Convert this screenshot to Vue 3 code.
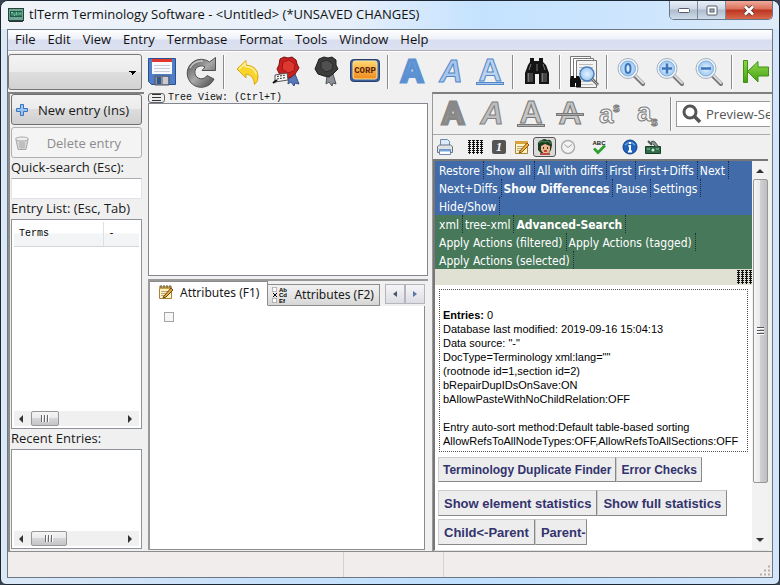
<script setup>
import { ref } from 'vue'

const menus = ['File', 'Edit', 'View', 'Entry', 'Termbase', 'Format', 'Tools', 'Window', 'Help']

const diffRows = [
  [{ t: 'Restore' }, { t: 'Show all' }, { t: 'All with diffs' }, { t: 'First' }, { t: 'First+Diffs' }, { t: 'Next' }],
  [{ t: 'Next+Diffs' }, { t: 'Show Differences', b: true }, { t: 'Pause' }, { t: 'Settings' }],
  [{ t: 'Hide/Show' }]
]
const actionRows = [
  [{ t: 'xml' }, { t: 'tree-xml' }, { t: 'Advanced-Search', b: true }],
  [{ t: 'Apply Actions (filtered)' }, { t: 'Apply Actions (tagged)' }],
  [{ t: 'Apply Actions (selected)' }]
]
const linkGroups = [
  { name: 'blue', rows: diffRows },
  { name: 'green', rows: actionRows }
]

const info = [
  'Database last modified: 2019-09-16 15:04:13',
  'Data source: "-"',
  'DocType=Terminology xml:lang=""',
  '(rootnode id=1,section id=2)',
  'bRepairDupIDsOnSave:ON',
  'bAllowPasteWithNoChildRelation:OFF',
  '',
  'Entry auto-sort method:Default table-based sorting',
  'AllowRefsToAllNodeTypes:OFF,AllowRefsToAllSections:OFF'
]

const quick = ref('')
const preview = ref('')
const checked = ref(false)
</script>

<template>
  <div class="window">
    <svg class="defs" width="0" height="0" aria-hidden="true">
      <defs>
        <linearGradient id="blueA" x1="0" y1="0" x2="0" y2="1"><stop offset="0" stop-color="#8fb8e8" /><stop offset="1" stop-color="#3f78c2" /></linearGradient>
        <linearGradient id="grayA" x1="0" y1="0" x2="0" y2="1"><stop offset="0" stop-color="#7c7c7c" /><stop offset="1" stop-color="#a9a9a9" /></linearGradient>
        <linearGradient id="steel" x1="0" y1="0" x2="1" y2="1"><stop offset="0" stop-color="#4a4a4a" /><stop offset=".5" stop-color="#a8a8a8" /><stop offset="1" stop-color="#3f3f3f" /></linearGradient>
        <linearGradient id="gold" x1="0" y1="0" x2="0" y2="1"><stop offset="0" stop-color="#ffd76e" /><stop offset="1" stop-color="#f08a1d" /></linearGradient>
        <linearGradient id="leaf" x1="0" y1="0" x2="0" y2="1"><stop offset="0" stop-color="#8fd84a" /><stop offset="1" stop-color="#43a012" /></linearGradient>
        <radialGradient id="glass"><stop offset="0" stop-color="#e6f3ff" /><stop offset="1" stop-color="#9cc8f2" /></radialGradient>
      </defs>
    </svg>

    <header class="titlebar">
      <svg class="appicon" width="16" height="14" viewBox="0 0 16 14">
        <rect x=".5" y=".5" width="15" height="12" fill="#6fa592" stroke="#24443c" />
        <rect x="2" y="3" width="12" height="6" fill="#1f5a48" />
        <path d="M3 4.500h2M4 4.500v3M6 4.500v3h1M8 7.500v-3h1v3M11 7.500v-3l1 1 1-1v3" stroke="#7fd0a8" fill="none" />
        <path d="M1 13.500h14" stroke="#333" />
      </svg>
      <h1>tlTerm Terminology Software - &lt;Untitled&gt; (*UNSAVED CHANGES)</h1>
      <div class="winbtns">
        <button class="wb min" aria-label="Minimize"><svg width="14" height="8" viewBox="0 0 14 8"><rect x="1.500" y="2.500" width="11" height="4" rx="1" fill="#fff" stroke="#555c6b" /></svg></button>
        <button class="wb max" aria-label="Maximize"><svg width="12" height="11" viewBox="0 0 12 11"><rect x="1" y="1" width="10" height="9" rx="1" fill="#fff" stroke="#555c6b" /><rect x="4" y="4" width="4" height="3" fill="#aab4c4" stroke="#555c6b" /></svg></button>
        <button class="wb close" aria-label="Close"><svg width="14" height="11" viewBox="0 0 14 11"><path d="M3 1.500l8 8M11 1.500l-8 8" stroke="#5b3a3a" stroke-width="4.500" /><path d="M3 1.500l8 8M11 1.500l-8 8" stroke="#fff" stroke-width="2.600" /></svg></button>
      </div>
    </header>

    <div class="client">
      <nav class="menubar"><a v-for="m in menus" :key="m" href="#">{{ m }}</a></nav>

      <div class="toolbar">
        <select class="combo" aria-label="Termbase"><option></option></select>
        <button class="tb" aria-label="Save">
          <svg width="30" height="30" viewBox="0 0 30 30">
            <path d="M1.500 1.500h27v26h-24l-3-3z" fill="#4f7fc9" stroke="#2c4f90" />
            <rect x="5" y="2" width="20" height="15" fill="#f7f9fc" /><rect x="5" y="2" width="20" height="3" fill="#e0382e" />
            <path d="M7 8.500h16M7 11.500h16M7 14.500h16" stroke="#c6ccd8" />
            <path d="M8 19h14v9h-14z" fill="#8a8f98" stroke="#4d5766" /><rect x="10" y="20" width="4" height="7" fill="#35568f" /><path d="M16 20h5v7h-5z" fill="#c8ccd2" />
          </svg>
        </button>
        <button class="tb" aria-label="Reload">
          <svg width="32" height="32" viewBox="0 0 32 32">
            <path d="M24.500 6A14 14 0 1 0 29 23L22 19.500A6.500 6.500 0 1 1 20 11L17 14.500H30.500V1.500z" fill="url(#steel)" stroke="#505050" />
            <path d="M5 12q4-8 13-7" stroke="#c9c9c9" stroke-width="1.500" fill="none" />
          </svg>
        </button>
        <i class="sep"></i>
        <button class="tb" aria-label="Undo">
          <svg width="28" height="28" viewBox="0 0 28 28"><path d="M3 11L12 2.500V7q12 1 12 12 0 5-3.500 7.500Q20 17 12 16v4z" fill="#fbd42a" stroke="#d9a913" /><path d="M5 11L11 5.500v3q9 0 11.500 8" fill="none" stroke="#fff0a0" stroke-width="1.500" /></svg>
        </button>
        <button class="tb" aria-label="Certify">
          <svg width="30" height="32" viewBox="0 0 30 32">
            <path d="M17 19l-1 9 3-2 3 4 1-3 4 1-4-10z" fill="#5878b8" stroke="#324f88" />
            <path d="M8 3l4-2 4 1 4-1 4 3 1 4 2 4-4 6-5 4-5-1-5-2-3-6 2-4z" fill="#c92020" stroke="#7d0e0e" />
            <path d="M11 6l6-2 6 4-1 7-6 2-6-4z" fill="#dc3830" stroke="#a31414" />
            <path d="M3 19l12-2 1 7-13 2z" fill="#f8f8f8" stroke="#555" /><path d="M5 20.500l9-1.500M5 23l9-1.500" stroke="#333" stroke-dasharray="2 1" />
            <path d="M1 27l4-3" stroke="#111" stroke-width="2" />
          </svg>
        </button>
        <button class="tb" aria-label="Seal">
          <svg width="30" height="32" viewBox="0 0 30 32">
            <path d="M16 19l-1 9 3-2 3 4 1-3 3 1-3-10z" fill="#8b8f95" stroke="#50545a" />
            <path d="M8 3l5-2 4 1 4-1 4 3 0 5 2 4-4 4-5 4-5-1-6-2-3-5 2-5z" fill="#3c3c3c" stroke="#1f1f1f" />
            <path d="M10 6l6-2 6 4-1 6-6 2-5-4z" fill="#505050" stroke="#2b2b2b" />
          </svg>
        </button>
        <button class="tb" aria-label="Corporate">
          <svg width="32" height="28" viewBox="0 0 32 28"><rect x="1.500" y="1.500" width="29" height="22" rx="3" fill="#3b5e9c" stroke="#27406f" /><rect x="4" y="3" width="24" height="18" rx="2" fill="url(#gold)" stroke="#ffe49a" /><text x="16" y="15" text-anchor="middle" class="corp">CORP</text></svg>
        </button>
        <i class="sep"></i>
        <button class="tb" aria-label="Bold"><svg width="36" height="38" viewBox="0 0 36 38"><text x="18" y="29" class="ltr heavy" text-anchor="middle" fill="url(#blueA)" stroke="#5d92d2">A</text></svg></button>
        <button class="tb" aria-label="Italic"><svg width="36" height="38" viewBox="0 0 36 38"><text x="18" y="29" class="ltr ital" text-anchor="middle" fill="#a9c6ea" stroke="#5287ca">A</text></svg></button>
        <button class="tb" aria-label="Underline"><svg width="36" height="38" viewBox="0 0 36 38"><text x="18" y="28" class="ltr" text-anchor="middle" fill="#bcd3ee" stroke="#5287ca">A</text><rect x="4.500" y="29.500" width="27" height="2" fill="#a9c6ea" stroke="#5287ca" /></svg></button>
        <i class="sep"></i>
        <button class="tb" aria-label="Find">
          <svg width="28" height="30" viewBox="0 0 28 30"><path d="M7 1h4v3h5V1h4v4l3 3 3 8v11H16V17h-4v10H2V16l3-8 2-3z" fill="#151515" /><path d="M4 16h6v9H4zM18 16h6v9h-6z" fill="#444" /><path d="M5.500 16v9M19.500 16v9" stroke="#777" /><path d="M8 7l-2 6M20 7l2 6M14 7v7" stroke="#777" /></svg>
        </button>
        <i class="sep"></i>
        <button class="tb" aria-label="Find in files">
          <svg width="34" height="34" viewBox="0 0 34 34"><path d="M3.500 1.500h20v28h-20z" fill="#fff" stroke="#777" /><path d="M6.500 3.500h20v28h-20z" fill="#fff" stroke="#777" /><path d="M9.500 5.500h20v27h-20z" fill="#f3f3f3" stroke="#777" /><path d="M12 9.500h14M12 12.500h14M12 15.500h8M12 18.500h6M12 26.500h13M12 29.500h14" stroke="#bbb" /><circle cx="20" cy="19" r="7" fill="url(#glass)" stroke="#4b7fbd" stroke-width="1.500" /><path d="M25 24l6 6" stroke="#666" stroke-width="3" /><path d="M25 24l6 6" stroke="#bbb" /><path d="M4 21h3v2h2v-2h3l2 4v7H9v-4H8v4H3v-7z" fill="#111" /></svg>
        </button>
        <i class="sep"></i>
        <button v-for="z in ['0', '+', '-']" :key="z" class="tb" :aria-label="'Zoom ' + z">
          <svg width="30" height="30" viewBox="0 0 30 30">
            <path d="M19 19l8 8" stroke="#777" stroke-width="4" stroke-linecap="round" /><path d="M19 18l8 8" stroke="#ddd" stroke-width="2" stroke-linecap="round" />
            <circle cx="12" cy="11.500" r="10" fill="#eef3f8" stroke="#a5b1c0" /><circle cx="12" cy="11.500" r="7.500" fill="url(#glass)" stroke="#7fadde" />
            <ellipse v-if="z === '0'" cx="12" cy="11.500" rx="2.500" ry="4.500" fill="none" stroke="#3d74bb" stroke-width="2" />
            <path v-else-if="z === '+'" d="M12 6.500v10M7 11.500h10" stroke="#3d74bb" stroke-width="2.500" />
            <path v-else d="M7 11.500h10" stroke="#3d74bb" stroke-width="2.500" />
          </svg>
        </button>
        <i class="sep"></i>
        <button class="tb" aria-label="Back"><svg width="28" height="28" viewBox="0 0 28 28"><path d="M1.500 2.500h4v22h-4z" fill="url(#leaf)" stroke="#3f9212" /><path d="M5.500 13.500L16 3.500v5.500h10.500v9H16v6z" fill="url(#leaf)" stroke="#3f9212" /></svg></button>
      </div>

      <main class="main">
        <aside class="left">
          <div class="wides">
            <button class="wide">
              <svg width="16" height="16" viewBox="0 0 16 16"><path d="M6.500 2.500h3v4h4v3h-4v4h-3v-4h-4v-3h4z" fill="#9cc4f0" stroke="#3a74c0" /></svg>
              <span>New entry (Ins)</span>
            </button>
            <button class="wide off" disabled>
              <svg width="16" height="16" viewBox="0 0 16 16"><path d="M2 4.500h12l-2 10H4z" fill="#d6d6d6" stroke="#a8a8a8" /><ellipse cx="8" cy="4" rx="6.500" ry="2" fill="#eee" stroke="#aaa" /><path d="M6 7v6M8 7v7M10 7v6" stroke="#aaa" /></svg>
              <span>Delete entry</span>
            </button>
          </div>
          <label for="quick">Quick-search (Esc):</label>
          <input id="quick" v-model="quick" class="quick" type="text">
          <p class="lbl">Entry List: (Esc, Tab)</p>
          <div class="list grow">
            <table class="terms"><thead><tr><th class="c1">Terms</th><th>-</th></tr></thead></table>
            <div class="fill"></div>
            <div class="hscroll"><svg width="5" height="8"><path d="M5 0v8L1 4z" fill="#333" /></svg><span class="thumb"><i></i><i></i><i></i></span><svg width="5" height="8"><path d="M0 0v8L4 4z" fill="#333" /></svg></div>
          </div>
          <p class="lbl">Recent Entries:</p>
          <div class="list recent">
            <div class="fill"></div>
            <div class="hscroll"><svg width="5" height="8"><path d="M5 0v8L1 4z" fill="#333" /></svg><span class="thumb big"><i></i><i></i><i></i></span><svg width="5" height="8"><path d="M0 0v8L4 4z" fill="#333" /></svg></div>
          </div>
        </aside>

        <section class="center">
          <div class="treehead"><button class="burger" aria-label="Tree menu"><svg width="9" height="7"><path d="M0 .5h9M0 3.500h9M0 6.500h9" stroke="#333" /></svg></button><span>Tree View: (Ctrl+T)</span></div>
          <div class="tree"></div>
          <div class="attrs">
            <div class="tabs">
              <button class="tab on">
                <svg width="16" height="16" viewBox="0 0 16 16"><path d="M1.500 3.500h12v11h-12z" fill="#fff3c4" stroke="#a8843a" /><path d="M1 2h13v3H1z" fill="#c9a24a" /><path d="M3 1v3M6 1v3M9 1v3M12 1v3" stroke="#555" /><path d="M3 7.500h8M3 9.500h6M3 11.500h4" stroke="#b9a878" /><path d="M6 12l7-8 2 2-7 7-3 1z" fill="#e8a33a" stroke="#6b4413" /></svg>
                <span>Attributes (F1)</span>
              </button>
              <button class="tab">
                <svg width="16" height="20" viewBox="0 0 16 20"><path d="M.5 2.500h4v4h-4zM.5 13.500h4v4h-4z" fill="#fff" stroke="#777" stroke-dasharray="1 1" /><path d="M1 8l4 4M5 8l-4 4" stroke="#000" /><text x="7" y="7" class="tiny">Ab</text><text x="7" y="12" class="tiny">Cd</text><text x="7" y="18" class="tiny">Ef</text></svg>
                <span>Attributes (F2)</span>
              </button>
              <div class="spin">
                <button aria-label="Previous tab"><svg width="4" height="6"><path d="M4 0v6L0 3z" fill="#4a5568" /></svg></button>
                <button aria-label="Next tab"><svg width="4" height="6"><path d="M0 0v6L4 3z" fill="#5577aa" /></svg></button>
              </div>
            </div>
            <div class="pane"><input v-model="checked" type="checkbox" aria-label="Attribute"></div>
          </div>
        </section>

        <section class="right">
          <div class="fmt">
            <button class="tb" aria-label="Bold"><svg width="36" height="38" viewBox="0 0 36 38"><text x="18" y="29" class="ltr heavy" text-anchor="middle" fill="url(#grayA)" stroke="#888">A</text></svg></button>
            <button class="tb" aria-label="Italic"><svg width="36" height="38" viewBox="0 0 36 38"><text x="18" y="29" class="ltr ital" text-anchor="middle" fill="#bdbdbd" stroke="#808080">A</text></svg></button>
            <button class="tb" aria-label="Underline"><svg width="36" height="38" viewBox="0 0 36 38"><text x="18" y="28" class="ltr" text-anchor="middle" fill="#c6c6c6" stroke="#777">A</text><rect x="4.500" y="29.500" width="27" height="2" fill="#b5b5b5" stroke="#777" /></svg></button>
            <button class="tb" aria-label="Strikethrough"><svg width="36" height="38" viewBox="0 0 36 38"><text x="18" y="29" class="ltr" text-anchor="middle" fill="#c6c6c6" stroke="#777">A</text><rect x="4.500" y="18.500" width="27" height="2" fill="#aaa" stroke="#777" /></svg></button>
            <button class="tb" aria-label="Superscript"><svg width="36" height="38" viewBox="0 0 36 38"><text x="8" y="28" class="sub" fill="#f4f4f4" stroke="#7d7d7d">a</text><text x="22" y="17" class="subs" fill="#eee" stroke="#777">s</text></svg></button>
            <button class="tb" aria-label="Subscript"><svg width="36" height="38" viewBox="0 0 36 38"><text x="7" y="26" class="sub" fill="#f4f4f4" stroke="#7d7d7d">a</text><text x="21" y="31" class="subs" fill="#eee" stroke="#777">s</text></svg></button>
            <i class="sep"></i>
            <label class="search">
              <svg width="20" height="20" viewBox="0 0 20 20"><circle cx="8" cy="8" r="6" fill="none" stroke="#555" stroke-width="3" /><path d="M12 12l6 6" stroke="#555" stroke-width="3.500" /></svg>
              <input v-model="preview" type="text" placeholder="Preview-Search" aria-label="Preview search">
            </label>
          </div>

          <div class="small">
            <button class="sb" aria-label="Print"><svg width="18" height="18" viewBox="0 0 18 18"><path d="M4.500 1.500h7l2 2v5h-9z" fill="#dceafa" stroke="#6d88ac" /><path d="M1.500 8.500l2-1.500h11l2 1.500v6h-15z" fill="#dfe3e8" stroke="#6b7684" /><path d="M3.500 11.500h11v5h-11z" fill="#fff" stroke="#6d88ac" /><path d="M4 12.500h10" stroke="#71a4de" stroke-width="2" /></svg></button>
            <i class="sp"></i>
            <button class="sb" aria-label="Columns"><svg width="15" height="14" viewBox="0 0 15 14" shape-rendering="crispEdges"><path d="M1.500 0v14M5.500 0v14M9.500 0v14M13.500 0v14" stroke="#111" stroke-width="3" stroke-dasharray="1 1" /><path d="M1.500 0v14M5.500 0v14M9.500 0v14M13.500 0v14" stroke="#111" /></svg></button>
            <button class="sb" aria-label="Level one"><svg width="16" height="16" viewBox="0 0 16 16"><rect x="1" y="1" width="14" height="14" rx="2" fill="#555" /><text x="8" y="12" text-anchor="middle" class="one">1</text></svg></button>
            <button class="sb" aria-label="Edit"><svg width="16" height="16" viewBox="0 0 16 16"><path d="M1.500 3.500h12v11h-12z" fill="#fff3c4" stroke="#a8843a" /><path d="M1 2h13v3H1z" fill="#d8a33a" /><path d="M3 7.500h8M3 9.500h6M3 11.500h4" stroke="#b9a878" /><path d="M6 12l7-8 2 2-7 7-3 1z" fill="#f2b13a" stroke="#8b5413" /></svg></button>
            <button class="sb pressed" aria-label="Profile"><svg width="18" height="18" viewBox="0 0 18 18"><path d="M2 8q-1-5 4-6 2-2 5 0 5-1 5 5l-1 5-2 3H5l-3-3z" fill="#1c3a22" /><path d="M5 8l4-2 5 2v4q-1 4-4 4t-5-4z" fill="#eeb48c" /><path d="M3 5q3-3 6-1 4-2 6 2" stroke="#3f7a48" stroke-width="1.500" fill="none" /><path d="M7 10h1M11 10h1" stroke="#111" stroke-width="1.500" /><path d="M8 13h3M4 16h10" stroke="#b02020" stroke-width="1.500" /></svg></button>
            <button class="sb" aria-label="History"><svg width="16" height="16" viewBox="0 0 16 16"><circle cx="8" cy="8" r="6.500" fill="#f3f3f3" stroke="#b0b0b0" stroke-width="1.500" /><path d="M4.500 5.500L8 8.500l4-3" stroke="#999" fill="none" /></svg></button>
            <i class="sp"></i>
            <button class="sb" aria-label="Spell check"><svg width="16" height="16" viewBox="0 0 16 16"><text x="8" y="6" text-anchor="middle" class="abc">ABC</text><path d="M3 9.500l4 4 7-7" stroke="#2fa02f" stroke-width="2.800" fill="none" /></svg></button>
            <i class="sp"></i>
            <button class="sb" aria-label="Info"><svg width="16" height="16" viewBox="0 0 16 16"><circle cx="8" cy="8" r="7" fill="#1f63bd" stroke="#123f80" /><path d="M3 6q5-5 10 0" stroke="#6ba3e6" stroke-width="1.500" fill="none" /><path d="M8 3v2M6.500 7H8v5M6 12.500h4" stroke="#fff" stroke-width="2" fill="none" /></svg></button>
            <button class="sb" aria-label="Toolbox"><svg width="16" height="16" viewBox="0 0 16 16"><path d="M.5 7.500h15v7H.5z" fill="#2f6b48" stroke="#173d28" /><path d="M6 5V3q2-2 4 0l3 4-2 1-3-3" fill="#8a9a90" stroke="#47584e" /><path d="M3 2l4 4" stroke="#47584e" stroke-width="2" /><circle cx="8" cy="11" r="1.500" fill="#cfe8d8" /><path d="M2 10h3M11 10h3" stroke="#8fc8a4" /></svg></button>
          </div>

          <div class="view">
            <div class="doc">
              <div v-for="g in linkGroups" :key="g.name" class="links" :class="g.name">
                <div v-for="(row, i) in g.rows" :key="i" class="lrow"><a v-for="l in row" :key="l.t" href="#" :class="{ b: l.b }">{{ l.t }}</a></div>
              </div>
              <div class="beige"><svg width="15" height="14" viewBox="0 0 15 14" shape-rendering="crispEdges"><path d="M1.500 0v14M5.500 0v14M9.500 0v14M13.500 0v14" stroke="#111" stroke-width="3" stroke-dasharray="1 1" /><path d="M1.500 0v14M5.500 0v14M9.500 0v14M13.500 0v14" stroke="#111" /></svg></div>
              <div class="info">
                <p></p>
                <p><b>Entries:</b> 0</p>
                <p v-for="(line, i) in info" :key="i">{{ line }}</p>
              </div>
              <div class="btnrow sm"><button>Terminology Duplicate Finder</button><button>Error Checks</button></div>
              <div class="btnrow mid"><button>Show element statistics</button><button>Show full statistics</button></div>
              <div class="btnrow low"><button>Child&lt;-Parent</button><button class="cut">Parent-</button></div>
            </div>
            <div class="vscroll"><svg width="8" height="5"><path d="M0 5h8L4 1z" fill="#333" /></svg><span class="vthumb"><i></i><i></i><i></i></span><svg width="8" height="5"><path d="M0 0h8L4 4z" fill="#333" /></svg></div>
          </div>
        </section>
      </main>

      <footer class="status"><span></span><span></span><span><svg width="11" height="11"><path d="M8 1.500h2M4 5.500h2M8 5.500h2M0 9.500h2M4 9.500h2M8 9.500h2" stroke="#b5b0aa" stroke-width="2" /></svg></span></footer>
    </div>
  </div>
</template>

<style>
body { background: #3a4350; }
</style>

<style scoped>
* { box-sizing: border-box; }
.window { font-family: "Open Sans", "Noto Sans", sans-serif; font-size: 13px; color: #1a1a1a; height: 100vh; display: flex; flex-direction: column; padding: 0 6px 6px; border: 1px solid #1c2733; border-radius: 8px 8px 6px 6px; background: linear-gradient(90deg, #dbe8f6, #c9e1fa 30%, #bfe0ff 60%, #d3e6fa); overflow: hidden; }
.defs { position: absolute; }
button { font: inherit; color: inherit; padding: 0; border: 0; background: none; }
svg { flex: none; }
p { margin: 0; }
.titlebar { flex: none; height: 28px; display: flex; align-items: center; gap: 5px; margin: 0 -6px; padding: 0 6px 0 7px; background: linear-gradient(90deg, #f0f4f9 0, #e6effa 45%, #c4e2ff 62%, #cfe6fd 85%, #dfebf7); }
.titlebar h1 { margin: 0; flex: 1; font-size: 13px; font-weight: 400; line-height: 20px; padding-bottom: 2px; white-space: nowrap; color: #111; }
.winbtns { align-self: flex-start; display: flex; height: 19px; border: 1px solid #66758a; border-top: 0; border-radius: 0 0 5px 5px; overflow: hidden; }
.wb { width: 28px; display: flex; align-items: center; justify-content: center; border-right: 1px solid #7c899b; background: linear-gradient(#e8eff7 0, #ccd7e4 45%, #aebccd 50%, #cfdcea); }
.wb.close { width: 46px; border: 0; background: linear-gradient(#eeaa9b 0, #d9705a 45%, #bd3320 50%, #d8694c); }
.client { flex: 1; min-height: 0; display: flex; flex-direction: column; border: 1px solid #6b7785; background: #f0f0f0; }
.menubar { flex: none; height: 21px; display: flex; gap: 12px; padding: 0 7px; background: linear-gradient(#fff 0, #eef1f9 45%, #d8def0 50%, #dde2f1); border-bottom: 1px solid #a9acb5; }
.menubar a { color: #111; text-decoration: none; line-height: 19px; }
.toolbar { flex: none; height: 41px; display: flex; align-items: center; overflow: hidden; border-top: 1px solid #fff; background: #f0f0f0; }
.combo { flex: none; appearance: none; width: 134px; height: 36px; border: 1px solid #777; border-radius: 3px; background-image: linear-gradient(45deg, transparent 50%, #000 50%), linear-gradient(-45deg, transparent 50%, #000 50%), linear-gradient(#f3f3f3 0, #ececec 49%, #dedede 50%, #d2d2d2); background-size: 4px 4px, 4px 4px, 100% 100%; background-position: right 8px top 16px, right 4px top 16px, 0 0; background-repeat: no-repeat; }
.tb { flex: none; width: 39px; height: 38px; display: flex; align-items: center; justify-content: center; }
.sep { flex: none; width: 8px; height: 34px; background: linear-gradient(90deg, transparent 3px, #8c8c8c 3px, #8c8c8c 4px, #fff 4px, #fff 5px, transparent 5px); }
.ltr { font: 700 32px "Liberation Sans", sans-serif; stroke-width: 1px; }
.heavy { stroke-width: 3px; }
.ital { font: italic 700 32px "Liberation Sans", sans-serif; }
.corp { font: 700 9px "Liberation Mono", monospace; fill: #5a2208; }
.sub { font: 700 26px "Liberation Sans", sans-serif; }
.subs { font: 700 12px "Liberation Sans", sans-serif; }
.one { font: italic 700 12px "Liberation Serif", serif; fill: #fff; }
.abc { font: 700 6px "Liberation Sans", sans-serif; fill: #111; }
.tiny { font: 700 6px "Liberation Sans", sans-serif; }

.main { flex: 1; min-height: 0; display: grid; grid-template-columns: 136px minmax(0, 288fr) minmax(0, 340fr); }
.left { display: flex; flex-direction: column; padding: 0 2px 2px 1px; border-top: 2px solid #808080; border-left: 2px solid #8d8d8d; min-height: 0; }
.wides { flex: none; display: flex; flex-direction: column; gap: 2px; }
.wide { height: 31px; display: flex; align-items: center; padding: 0 12px 0 2px; border: 1px solid #707070; border-radius: 3px; background: linear-gradient(#f2f2f2 0, #ebebeb 49%, #dddddd 50%, #cfcfcf); }
.wide span { flex: 1; text-align: right; white-space: nowrap; }
.wide.off { border-color: #b0b0b0; background: #f4f4f4; color: #8c8c8c; }
.wide.off span { padding-right: 8px; }
.left label, .lbl { flex: none; height: 20px; line-height: 19px; white-space: nowrap; }
.quick { flex: none; height: 21px; width: 100%; border: 1px solid #e2e3ea; border-top-color: #abadb3; background: #fff; }
.list { display: flex; flex-direction: column; border: 1px solid #8e9299; background: #fff; padding: 2px; min-height: 0; }
.grow { flex: 1; }
.recent { flex: none; height: 100px; }
.fill { flex: 1; }
.terms { width: 100%; border-collapse: collapse; font: 10px "Liberation Mono", monospace; background: linear-gradient(#fff 45%, #f3f4f6 50%); color: #000; }
.terms th { height: 24px; padding: 0 5px; font-weight: 400; text-align: left; border-bottom: 1px solid #d5d5d5; }
.terms .c1 { width: 89px; border-right: 1px solid #dedfe1; }
.hscroll { flex: none; height: 15px; display: flex; align-items: center; background: #f0f0f0; padding: 0 6px 0 4px; gap: 8px; }
.hscroll svg:last-child { margin-left: auto; }
.thumb { width: 28px; height: 15px; display: flex; align-items: center; justify-content: center; gap: 1px; border: 1px solid #979797; border-radius: 2px; background: linear-gradient(#f5f5f5 0, #e9e9eb 49%, #d6d6d8 50%, #c5c5c8); }
.thumb.big { width: 36px; }
.thumb i { width: 2px; height: 7px; background: #666; border-right: 1px solid #fff; }

.center { display: flex; flex-direction: column; padding: 0 4px 1px 4px; min-height: 0; }
.treehead { flex: none; height: 11px; display: flex; align-items: center; gap: 3px; font: 10px "Liberation Mono", monospace; color: #111; }
.burger { width: 17px; height: 10px; display: flex; align-items: center; justify-content: center; border: 1px solid #666; border-radius: 3px; background: #eee; }
.tree { flex: 171; border: 1px solid #828790; background: #fff; }
.attrs { flex: 270; display: flex; flex-direction: column; margin-top: 3px; border: 1px solid #999; border-width: 2px 0 0 2px; padding-right: 3px; min-height: 0; }
.tabs { flex: none; height: 25px; display: flex; align-items: flex-end; overflow: hidden; font-family: "Noto Sans", sans-serif; font-size: 12px; }
.tab { display: flex; align-items: center; gap: 6px; height: 22px; padding: 0 5px 0 4px; border: 1px solid #8c8c8c; border-width: 1px 1px 1px 0; background: linear-gradient(#f0f0f0 0, #e6e6e6 50%, #d6d6d6); white-space: nowrap; }
.tab.on { height: 25px; padding: 0 8px 2px 8px; background: #fff; border-bottom-color: #fff; }
.spin { display: flex; margin-left: auto; height: 22px; padding-bottom: 2px; }
.spin button { width: 20px; display: flex; align-items: center; justify-content: center; border: 1px solid #b5b5bb; background: linear-gradient(#f5f5f8, #dcdce4); }
.pane { flex: 1; border: 1px solid #8c8c8c; border-top: 0; border-left: 0; background: #fff; padding: 6px 14px; }
.pane input { appearance: none; display: block; width: 10px; height: 10px; margin: 0; border: 1px solid #a5a5a5; background: #f6f6f6; }

.right { display: flex; flex-direction: column; min-height: 0; border-top: 2px solid #808080; border-left: 1px solid #999; padding-right: 2px; }
.fmt { flex: none; height: 41px; display: flex; align-items: center; overflow: hidden; border-bottom: 1px solid #aaa; }
.search { flex: 1; min-width: 0; height: 26px; display: flex; align-items: center; gap: 4px; margin-left: 1px; padding-left: 5px; border: 1px solid #999; border-right: 0; background: #fff; }
.search input { flex: 1; min-width: 0; border: 0; padding: 0; outline: 0; font: 13px "Open Sans", sans-serif; color: #444; background: transparent; }
.search input::placeholder { color: #555; opacity: 1; }
.small { flex: none; height: 24px; display: flex; align-items: center; }
.sb { flex: none; width: 23px; height: 20px; display: flex; align-items: center; justify-content: center; }
.pressed { border: 1px solid #555; border-radius: 3px; background: #dadada; }
.sp { flex: none; width: 8px; }
.view { flex: 1; min-height: 0; display: flex; margin-right: 2px; border: 1px solid #999; border-width: 2px 0 1px 2px; border-color: #777 #fff #e3e3e3 #777; background: #fff; }
.doc { flex: 1; min-width: 0; overflow: hidden; }
.links { font: 12px "DejaVu Sans Condensed", "DejaVu Sans", sans-serif; color: #fff; }
.blue { background: #416ca9; }
.green { background: #47785a; }
.lrow { height: 18px; display: flex; padding-left: 2px; white-space: nowrap; }
.lrow a { color: #fff; text-decoration: none; line-height: 20px; padding: 0 3px 0 2px; border-right: 1px dotted #1c2c44; }
.lrow .b { font-weight: 700; }
.beige { height: 16px; background: #e0e0d3; display: flex; justify-content: flex-end; align-items: center; }
.info { margin: 4px 4px 5px; padding: 4px 3px 3px; border: 1px dotted #555; font: 11px "Liberation Sans", sans-serif; color: #000; white-space: nowrap; }
.info p { height: 14px; line-height: 14px; }
.btnrow { display: flex; padding-left: 3px; }
.btnrow button { height: 25px; padding: 0 4px; border: 1px solid #ccc; border-right-color: #888; border-bottom-color: #888; background: #ededed; color: #33336e; font: 700 12px "Liberation Sans", sans-serif; white-space: nowrap; }
.mid { margin: 8px 0 3px; }
.mid button, .low button { height: 26px; font-size: 13px; padding: 0 5px; }
.low .cut { padding-right: 0; }
.vscroll { flex: none; width: 16px; display: flex; flex-direction: column; align-items: center; gap: 6px; padding: 7px 0; background: #f2f2f2; }
.vscroll svg:last-child { margin-top: auto; }
.vthumb { flex: none; width: 15px; height: 81%; display: flex; flex-direction: column; align-items: center; justify-content: center; gap: 1px; border: 1px solid #979797; border-radius: 2px; background: linear-gradient(90deg, #f5f5f5 0, #e9e9eb 49%, #d0d0d3 50%, #bfbfc3); }
.vthumb i { width: 7px; height: 2px; background: #555; border-bottom: 1px solid #fff; }
.status { flex: none; height: 26px; display: flex; border-top: 1px solid #8c8c8c; background: #f0edec; }
.status span { border-right: 1px solid #d5d2d0; width: 100px; }
.status span:first-child { width: 336px; }
.status span:last-child { flex: 1; border: 0; display: flex; justify-content: flex-end; align-items: flex-end; padding: 1px; }
</style>
